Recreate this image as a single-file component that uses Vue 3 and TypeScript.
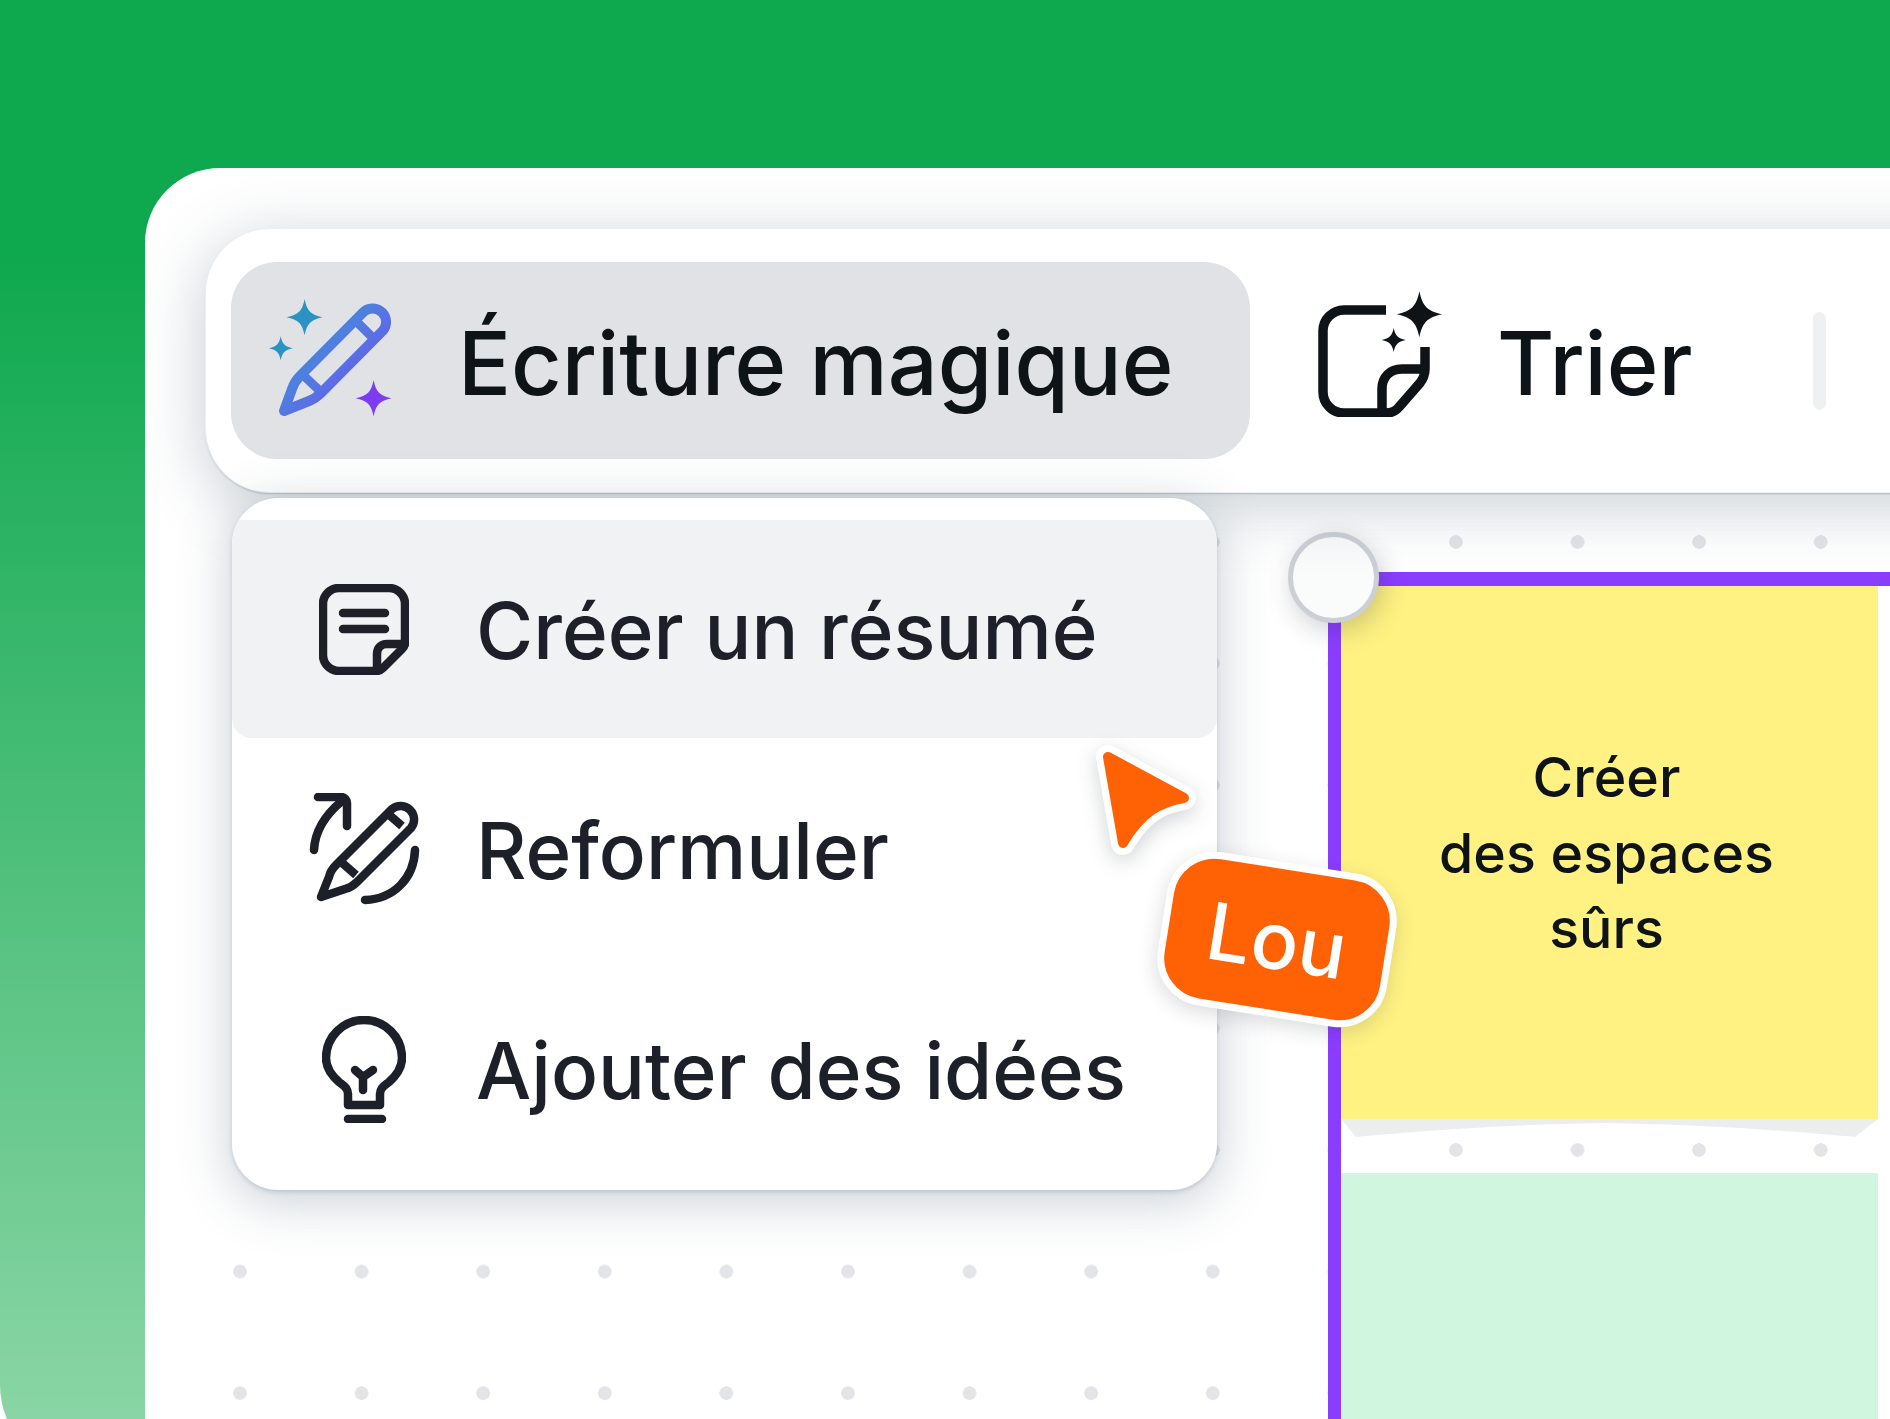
<template>
  <div class="page">
    <div class="backdrop">
      <div class="card">
        <header class="toolbar">
          <button class="tool tool-active">
            <svg class="tool-icon icon-magic" viewBox="0 0 125 120" width="125" height="120">
              <defs>
                <linearGradient id="magic" gradientUnits="userSpaceOnUse" x1="0" y1="0" x2="125" y2="120">
                  <stop offset="0" stop-color="#2a93c4" />
                  <stop offset="0.45" stop-color="#4f7fe0" />
                  <stop offset="1" stop-color="#7d3cf0" />
                </linearGradient>
              </defs>
              <path :d="sparkle(35.6, 18.3, 18)" fill="#2a93c4" />
              <path :d="sparkle(11.7, 49.3, 12)" fill="#2a93c4" />
              <path :d="sparkle(104.6, 99.3, 18)" fill="#7d3cf0" />
              <g fill="none" stroke="url(#magic)" stroke-width="10" stroke-linejoin="round" stroke-linecap="round">
                <path d="M15 112 L23 90 C25 84 28 80 31 77 L95 12.5 A13.5 13.5 0 0 1 114 31.5 L52 94 C48 98 45 100 40 102 Z" />
                <path d="M87 22 L106 41 M33 75 L52 93" stroke-linecap="butt" stroke-width="9" />
              </g>
            </svg>
            <span class="tool-label">Écriture magique</span>
          </button>
          <button class="tool tool-sort">
            <svg class="tool-icon icon-sort" viewBox="0 0 125 126" width="125" height="126">
              <path
                d="M68 19 H26 A21 21 0 0 0 5 40 V101 A21 21 0 0 0 26 122 H68 C74 122 78 120 81 116 L102 92 C105 88 107 84 107 78 V56 M106 78 H84 C72 78 64 86 64 98 V122"
                fill="none"
                stroke="#0e1318"
                stroke-width="9.5"
              />
              <path :d="sparkle(101.4, 23.3, 23)" fill="#0e1318" />
              <path :d="sparkle(75.7, 49, 12)" fill="#0e1318" />
            </svg>
            <span class="tool-label">Trier</span>
          </button>
          <i class="separator"></i>
        </header>

        <main class="canvas">
          <section class="frame">
            <div class="note note-yellow">
              <p>Créer<br />des espaces<br />sûrs</p>
              <svg class="curl" viewBox="0 0 537 18" width="537" height="18">
                <path d="M0 0 L15 18 Q140 6 262 4 Q390 6 514 18 L537 0 Z" fill="#ebedef" />
              </svg>
            </div>
            <div class="note note-green"></div>
          </section>
          <i class="handle"></i>

          <nav class="menu">
            <a v-for="(item, i) in items" :key="item.label" class="menu-row" :class="{ hovered: i === 0 }">
              <span class="menu-icon">
                <svg v-if="item.icon === 'note'" viewBox="0 0 90 91" width="90" height="91">
                  <g fill="none" stroke="#1d2028" stroke-width="8.5" stroke-linecap="round" stroke-linejoin="round">
                    <path d="M20 4 H70 A16 16 0 0 1 86 20 V58 C86 61 85 63 83 65 L64 84 C62 86 60 87 57 87 H20 A16 16 0 0 1 4 71 V20 A16 16 0 0 1 20 4 Z" />
                    <path d="M86 60 H68 C62 60 58 64 58 70 V87" />
                    <path d="M24 29 H66 M24 45 H66" />
                  </g>
                </svg>
                <svg v-else-if="item.icon === 'rewrite'" viewBox="0 0 111 112" width="111" height="112">
                  <g fill="none" stroke="#1d2028" stroke-width="8.5" stroke-linecap="round" stroke-linejoin="round">
                    <path d="M9 4 H32 A6 6 0 0 1 38 10 V33" />
                    <path d="M5 57 C6 37 16 22 33 8" />
                    <path d="M12 104 L20 84 C21 79 24 75 27 72 L83 16 A13.5 13.5 0 0 1 102 35 L48 89 C44 93 40 95 36 96 Z" />
                    <path d="M78 20 L93 33 M31 68 L47 82" stroke-linecap="butt" />
                    <path d="M106 57 C105 85 85 106 56 107" />
                  </g>
                </svg>
                <svg v-else viewBox="0 0 84 107" width="84" height="107">
                  <g fill="none" stroke="#1d2028" stroke-width="8.5" stroke-linecap="round" stroke-linejoin="round">
                    <path d="M26 89 V78 C26 72 22 70 17 66 C9 59 4 52 4 42 A38 38 0 0 1 80 42 C80 52 75 59 67 66 C62 70 58 72 58 78 V89 Z" />
                    <path d="M26 103 H60" />
                    <path d="M41 74 V61 M33 54 L41 61 L51 54" />
                  </g>
                </svg>
              </span>
              <span class="menu-label">{{ item.label }}</span>
            </a>
          </nav>

          <svg class="cursor" viewBox="0 0 125 135" width="125" height="135">
            <path :d="cursorPath" fill="#fff" stroke="#fff" stroke-width="24" stroke-linejoin="round" />
            <path :d="cursorPath" fill="#ff6105" stroke="#ff6105" stroke-width="10" stroke-linejoin="round" />
          </svg>
          <span class="name-tag">Lou</span>
        </main>
      </div>
    </div>
  </div>
</template>

<script setup lang="ts">
const items = [
  { label: "Créer un résumé", icon: "note" },
  { label: "Reformuler", icon: "rewrite" },
  { label: "Ajouter des idées", icon: "bulb" },
];

const cursorPath = "M23 22 L99 63 C75 67 56 77 38 108 Z";

// four point star used by both toolbar icons
function sparkle(cx: number, cy: number, r: number): string {
  const a = r * 0.14;
  const b = r * 0.34;
  return [
    `M${cx} ${cy - r}`,
    `C${cx + a} ${cy - b} ${cx + b} ${cy - a} ${cx + r} ${cy}`,
    `C${cx + b} ${cy + a} ${cx + a} ${cy + b} ${cx} ${cy + r}`,
    `C${cx - a} ${cy + b} ${cx - b} ${cy + a} ${cx - r} ${cy}`,
    `C${cx - b} ${cy - a} ${cx - a} ${cy - b} ${cx} ${cy - r}Z`,
  ].join(" ");
}
</script>

<style>
html,
body {
  margin: 0;
  background: #fff;
  overflow: hidden;
}
</style>

<style scoped>
.page {
  width: 1890px;
  height: 1419px;
  overflow: hidden;
  background: #fff;
  font-family: Inter, "Noto Sans", sans-serif;
}
.backdrop {
  display: flex;
  height: 1471px;
  box-sizing: border-box;
  padding: 168px 0 0 145px;
  border-bottom-left-radius: 86px;
  overflow: hidden;
  background: linear-gradient(#0ea84e 0, #0ea84e 250px, #8ad5a5 1419px);
}
.card {
  flex: 1;
  display: flex;
  flex-direction: column;
  min-width: 0;
  padding-top: 61px;
  border-top-left-radius: 75px;
  background: #fff;
  overflow: hidden;
}
.toolbar {
  position: relative;
  z-index: 2;
  display: flex;
  align-items: center;
  height: 263px;
  box-sizing: border-box;
  margin-left: 61px;
  margin-right: -120px;
  padding-left: 25px;
  border-radius: 64px;
  background: #fff;
  box-shadow: 0 0 0 1px #eceef1, 0 2px 2px rgba(64, 87, 109, 0.28), 0 12px 60px 6px rgba(64, 87, 109, 0.26);
}
.tool {
  display: flex;
  align-items: center;
  padding: 0;
  border: 0;
  background: none;
  font: inherit;
  font-size: 88px;
  font-weight: 500;
  color: #0e1318;
}
.tool-label {
  padding-top: 4px;
}
.tool-active {
  width: 1019px;
  height: 197px;
  box-sizing: border-box;
  padding-left: 38px;
  gap: 64px;
  border-radius: 46px;
  background: #e1e2e6;
}
.tool-sort {
  margin-left: 68px;
  gap: 54px;
}
.tool-icon {
  flex: none;
}
.icon-magic {
  margin-top: -4px;
}
.icon-sort {
  margin-top: -14px;
}
.separator {
  width: 13px;
  height: 98px;
  margin-left: 120px;
  border-radius: 7px;
  background: #eff0f2;
}
.canvas {
  position: relative;
  flex: 1;
  background-image: radial-gradient(circle, #e3e4e8 6.5px, transparent 7px);
  background-size: 121.6px 121.6px;
  background-position: 34.2px -10.8px;
}
.frame {
  position: absolute;
  left: 1183px;
  top: 80px;
  right: 0;
  bottom: 0;
  display: flex;
  flex-direction: column;
  gap: 54px;
  border-left: 13px solid #8b3dff;
  border-top: 14px solid #8b3dff;
}
.note {
  position: relative;
  width: 537px;
  flex: none;
}
.note-yellow {
  display: flex;
  align-items: center;
  justify-content: center;
  height: 533px;
  box-sizing: border-box;
  padding-right: 6px;
  background: #fff283;
}
.note-yellow p {
  margin: 0;
  font-size: 55.5px;
  font-weight: 500;
  line-height: 75.5px;
  text-align: center;
  color: #0e1318;
}
.curl {
  position: absolute;
  left: 0;
  top: 100%;
}
.note-green {
  flex: 1;
  background: #d0f6e0;
}
.handle {
  position: absolute;
  left: 1143px;
  top: 40px;
  width: 91px;
  height: 91px;
  box-sizing: border-box;
  border: 5px solid #ccd0d5;
  border-radius: 50%;
  background: #fafbfb;
  box-shadow: 4px 8px 26px rgba(30, 40, 50, 0.22);
}
.menu {
  position: absolute;
  z-index: 3;
  left: 87px;
  top: 6px;
  width: 985px;
  height: 692px;
  box-sizing: border-box;
  padding-top: 22px;
  border-radius: 46px;
  overflow: hidden;
  background: #fff;
  box-shadow: 0 2px 4px rgba(64, 87, 109, 0.2), 0 10px 50px 4px rgba(64, 87, 109, 0.26);
}
.menu-row {
  display: flex;
  align-items: center;
  height: 218px;
  margin-bottom: 2px;
  padding-left: 60px;
  gap: 40px;
  font-size: 78px;
  font-weight: 500;
  color: #1d2028;
}
.menu-row.hovered {
  border-radius: 0 0 20px 20px;
  background: #f1f2f4;
}
.menu-icon {
  display: flex;
  justify-content: center;
  width: 144px;
}
.menu-label {
  padding-top: 3px;
}
.cursor {
  position: absolute;
  z-index: 4;
  left: 940px;
  top: 243px;
  overflow: visible;
  filter: drop-shadow(0 6px 10px rgba(30, 40, 50, 0.2));
}
.name-tag {
  position: absolute;
  z-index: 4;
  left: 1016px;
  top: 370px;
  display: flex;
  align-items: center;
  justify-content: center;
  width: 218px;
  height: 141px;
  border: 7px solid #fff;
  border-radius: 48px;
  background: #ff6105;
  box-shadow: 0 6px 20px rgba(30, 40, 50, 0.16);
  transform: rotate(9deg);
  font-size: 79px;
  font-weight: 500;
  color: #fff;
}
</style>
